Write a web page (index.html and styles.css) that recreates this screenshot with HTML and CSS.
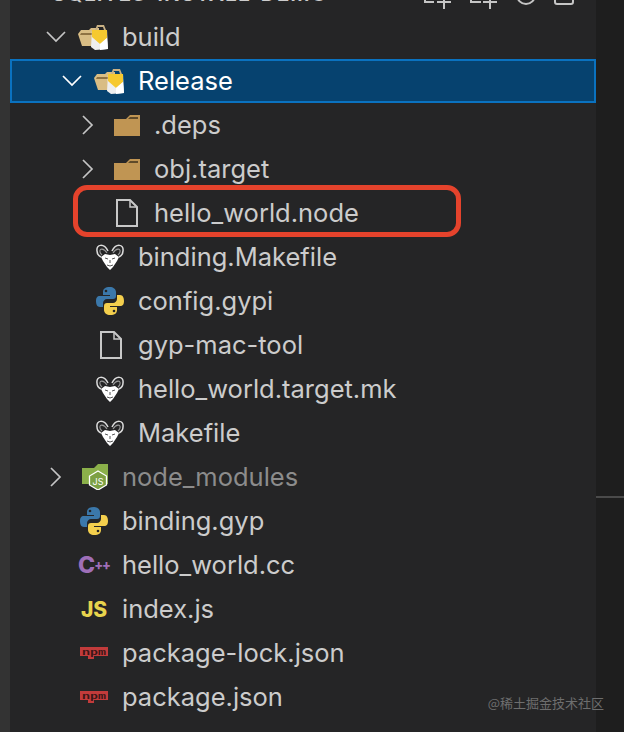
FILE: index.html
```html
<!DOCTYPE html>
<html lang="en">

<head>
    <meta charset="UTF-8">
    <meta name="viewport" content="width=device-width, initial-scale=1.0">
    <title>Explorer</title>
    <link rel="stylesheet" href="styles.css">
</head>

<body>

    <!-- Shared icons -->
    <svg class="defs" width="0" height="0">
        <defs>
            <symbol id="chev-down" viewBox="0 0 20 12">
                <path d="M1 1l9 9 9-9" fill="none" stroke="currentColor" stroke-width="1.7" />
            </symbol>
            <symbol id="chev-right" viewBox="0 0 12 20">
                <path d="M1 1l9 9-9 9" fill="none" stroke="currentColor" stroke-width="1.7" />
            </symbol>
            <symbol id="folder-open" viewBox="0 0 30 26">
                <path d="M0 10l3-4h8l2-2h8v18H4z" fill="#d9bd84" />
                <path d="M3 9h11v2H2z" fill="#8f7343" />
                <path d="M14 6h15l1 19-13 1-4-3z" fill="#eee" />
                <path d="M17 6l2-5h7l2 5h-2l-1-3h-5l-1 3z" fill="#c9b184" />
                <path d="M14 6h15v8l-7 6-8-7z" fill="#f6c92f" />
                <path d="M22 20l7-6 1 11-8 1z" fill="#fff" />
            </symbol>
            <symbol id="folder" viewBox="0 0 26 21">
                <path d="M0 4h12l4-4h10v21H0z" fill="#c09553" />
                <path d="M14 4l2-2h8v2z" fill="#5f4a29" />
            </symbol>
            <symbol id="file" viewBox="0 0 22 28">
                <path d="M1 1h13l7 7v19H1z" fill="none" stroke="#c8c8c8" stroke-width="2" />
                <path d="M14 1v7h7" fill="none" stroke="#c8c8c8" stroke-width="1.5" />
            </symbol>
            <symbol id="gnu" viewBox="0 0 28 28">
                <path d="M12 8C8 0 0 1 1 8c0 3 2 5 4 6" fill="none" stroke="#ddd" stroke-width="1.500" />
                <path d="M16 8c4-8 12-7 11 0 0 3-2 5-4 6" fill="none" stroke="#ddd" stroke-width="1.500" />
                <path d="M11 10C8 5 3 5 4 9c0 1 1 2 2 3M17 10c3-5 8-5 7-1 0 1-1 2-2 3" fill="none" stroke="#999" stroke-width="1.100" />
                <path d="M5 14l4-3 5 1 5-1 4 3-2 4-4 6-3 3-3-3-4-6z" fill="#fff" />
                <path d="M9 15l3 1M16 16l3-1M14 17v3M11 22l3 1 3-1" fill="none" stroke="#555" stroke-width="1" />
            </symbol>
            <symbol id="python" viewBox="0 0 28 28">
                <path d="M14 0c-5 0-7 2-7 5v3h7v1H4c-3 0-4 2-4 5s1 6 4 6h3v-4c0-2 2-4 4-4h6c2 0 3-1 3-3V5c0-3-3-5-6-5z" fill="#3b78aa" />
                <path d="M14 28c5 0 7-2 7-5v-3h-7v-1h10c3 0 4-2 4-5s-1-6-4-6h-3v4c0 2-2 4-4 4h-6c-2 0-3 1-3 3v4c0 3 3 5 6 5z" fill="#f4cf4d" />
                <circle cx="10" cy="4" r="1.3" fill="#252526" />
                <circle cx="18" cy="24" r="1.3" fill="#252526" />
            </symbol>
            <symbol id="npm" viewBox="0 0 28 12">
                <path d="M0 0h28v9H14v3H8V9H0z" fill="#c23b3b" />
                <text x="14" y="7.5" textLength="24" lengthAdjust="spacingAndGlyphs" class="npm-text">npm</text>
            </symbol>
        </defs>
    </svg>

    <div class="activity"></div>

    <main class="sidebar">
        <!-- Header, cut off by the top of the window -->
        <div class="head">
            <div class="head-inner">
                <span class="head-title">SQLITE3-INSTALL-DEMO</span>
                <div class="head-actions">
                    <svg class="act" viewBox="0 0 28 26"><path d="M1 1v16h9M20 10v14M13 17h14" fill="none" stroke="#c5c5c5" stroke-width="2" /></svg>
                    <svg class="act" viewBox="0 0 28 26"><path d="M1 4v13h10M20 10v14M13 17h14" fill="none" stroke="#c5c5c5" stroke-width="2" /></svg>
                    <svg class="act act-round" viewBox="0 0 20 20"><circle cx="10" cy="10" r="9" fill="none" stroke="#c5c5c5" stroke-width="2" /></svg>
                    <svg class="act act-round" viewBox="0 0 20 20"><rect x="1" y="1" width="18" height="18" rx="2" fill="none" stroke="#c5c5c5" stroke-width="2" /></svg>
                </div>
            </div>
        </div>

        <ul class="tree">
            <li class="row d0">
                <svg class="chev-d"><use href="#chev-down" /></svg>
                <span class="icon"><svg class="ic-open"><use href="#folder-open" /></svg></span>
                <span class="name">build</span>
            </li>
            <li class="row d1 selected">
                <svg class="chev-d"><use href="#chev-down" /></svg>
                <span class="icon"><svg class="ic-open"><use href="#folder-open" /></svg></span>
                <span class="name">Release</span>
            </li>
            <li class="row d2">
                <svg class="chev-r"><use href="#chev-right" /></svg>
                <span class="icon"><svg class="ic-folder"><use href="#folder" /></svg></span>
                <span class="name">.deps</span>
            </li>
            <li class="row d2">
                <svg class="chev-r"><use href="#chev-right" /></svg>
                <span class="icon"><svg class="ic-folder"><use href="#folder" /></svg></span>
                <span class="name">obj.target</span>
            </li>
            <li class="row d2 no-chev">
                <span class="icon"><svg class="ic-file"><use href="#file" /></svg></span>
                <span class="name">hello_world.node</span>
                <div class="callout"></div>
            </li>
            <li class="row d1 no-chev">
                <span class="icon"><svg class="ic-28"><use href="#gnu" /></svg></span>
                <span class="name">binding.Makefile</span>
            </li>
            <li class="row d1 no-chev">
                <span class="icon"><svg class="ic-28"><use href="#python" /></svg></span>
                <span class="name">config.gypi</span>
            </li>
            <li class="row d1 no-chev">
                <span class="icon"><svg class="ic-file"><use href="#file" /></svg></span>
                <span class="name">gyp-mac-tool</span>
            </li>
            <li class="row d1 no-chev">
                <span class="icon"><svg class="ic-28"><use href="#gnu" /></svg></span>
                <span class="name">hello_world.target.mk</span>
            </li>
            <li class="row d1 no-chev">
                <span class="icon"><svg class="ic-28"><use href="#gnu" /></svg></span>
                <span class="name">Makefile</span>
            </li>
            <li class="row d0 ignored">
                <svg class="chev-r"><use href="#chev-right" /></svg>
                <span class="icon">
                    <svg class="ic-node" viewBox="0 0 26 26">
                        <path d="M0 4h12l4-4h10v20H0z" fill="#8bb04a" />
                        <path d="M16 7l8.500 5v9l-8.500 5-8.500-5v-9z" fill="#7da043" stroke="#fff" stroke-width="1.300" />
                        <text x="16" y="20.500" class="node-text">JS</text>
                    </svg>
                </span>
                <span class="name">node_modules</span>
            </li>
            <li class="row d0 no-chev">
                <span class="icon"><svg class="ic-28"><use href="#python" /></svg></span>
                <span class="name">binding.gyp</span>
            </li>
            <li class="row d0 no-chev">
                <span class="icon"><span class="cpp">C<small>++</small></span></span>
                <span class="name">hello_world.cc</span>
            </li>
            <li class="row d0 no-chev">
                <span class="icon"><span class="js">JS</span></span>
                <span class="name">index.js</span>
            </li>
            <li class="row d0 no-chev">
                <span class="icon"><svg class="ic-npm"><use href="#npm" /></svg></span>
                <span class="name">package-lock.json</span>
            </li>
            <li class="row d0 no-chev">
                <span class="icon"><svg class="ic-npm"><use href="#npm" /></svg></span>
                <span class="name">package.json</span>
            </li>
        </ul>
    </main>

    <div class="editor">
        <div class="editor-line"></div>
    </div>

    <div class="watermark">@稀土掘金技术社区</div>

</body>

</html>
```

FILE: styles.css
```css
html,
body {
    height: 100%;
}

body {
    margin: 0;
    display: flex;
    overflow: hidden;
    background: #252526;
    color: #cccccc;
    font-family: Inter, 'Noto Sans', sans-serif;
    font-size: 25.5px;
}

.defs {
    position: absolute;
}

.activity {
    width: 10px;
    background: #333333;
}

.sidebar {
    width: 586px;
}

.editor {
    flex: 1;
    padding-top: 496px;
    background: #1e1e1e;
}

.editor-line {
    height: 2px;
    background: #4a4a4a;
}

/* Header */
.head {
    height: 15px;
    overflow: hidden;
}

.head-inner {
    display: flex;
    justify-content: space-between;
    margin-top: -19px;
    padding: 0 22px 0 42px;
}

.head-title {
    font-size: 21px;
    font-weight: 600;
    letter-spacing: 1px;
    line-height: 26px;
    white-space: nowrap;
}

.head-actions {
    display: flex;
    gap: 18px;
    align-items: flex-start;
    margin-top: 4px;
}

.act {
    width: 28px;
    height: 26px;
}

.act-round {
    width: 20px;
    height: 20px;
}

/* Tree */
.tree {
    list-style: none;
    margin: 0;
    padding: 0;
}

.row {
    position: relative;
    display: flex;
    align-items: center;
    height: 44px;
    box-sizing: border-box;
    white-space: nowrap;
}

.name {
    margin-bottom: 2px;
}

.d0 {
    padding-left: 36px;
}

.d1 {
    padding-left: 52px;
}

.d2 {
    padding-left: 68px;
}

.no-chev {
    padding-left: calc(var(--x, 0px));
}

.d0.no-chev {
    --x: 68px;
}

.d1.no-chev {
    --x: 84px;
}

.d2.no-chev {
    --x: 100px;
}

.selected {
    background: #06426f;
    border: 2px solid #0a72c0;
    padding-left: 50px;
    color: #ffffff;
}

.ignored {
    color: #8c8c8c;
}

.chev-d {
    width: 20px;
    height: 12px;
    margin-right: 12px;
    color: #c5c5c5;
}

.selected .chev-d {
    color: #ffffff;
}

.chev-r {
    width: 12px;
    height: 20px;
    margin: 0 16px 0 4px;
    color: #c5c5c5;
}

.icon {
    display: flex;
    align-items: center;
    justify-content: center;
    width: 30px;
    margin-right: 14px;
}

.ic-open {
    width: 30px;
    height: 26px;
}

.ic-folder {
    width: 26px;
    height: 21px;
    margin-left: 4px;
}

.ic-file {
    width: 22px;
    height: 28px;
    margin-left: 4px;
}

.ic-28 {
    width: 28px;
    height: 28px;
    margin-left: 2px;
}

.ic-node {
    width: 26px;
    height: 26px;
    margin-left: 4px;
}

.ic-npm {
    width: 28px;
    height: 12px;
    margin-left: 2px;
}

.npm-text {
    font-family: 'Liberation Mono', monospace;
    font-size: 9.5px;
    font-weight: bold;
    fill: #3a1616;
    text-anchor: middle;
}

.node-text {
    font-family: Inter, sans-serif;
    font-size: 9px;
    fill: #ffffff;
    text-anchor: middle;
}

.cpp {
    font-family: Inter, sans-serif;
    font-size: 23px;
    font-weight: 800;
    color: #9f6fb8;
    letter-spacing: -1px;
    margin-left: 2px;
}

.cpp small {
    font-size: 13px;
    vertical-align: 3px;
}

.js {
    font-family: Inter, sans-serif;
    font-size: 21px;
    font-weight: 800;
    color: #e8d44d;
    margin-left: 2px;
}

/* Red box drawn over the screenshot */
.callout {
    position: absolute;
    left: 63px;
    top: -6px;
    width: 378px;
    height: 42px;
    border: 5px solid #e5432c;
    border-radius: 14px;
}

.watermark {
    position: absolute;
    right: 20px;
    bottom: 20px;
    font-family: 'Noto Sans CJK SC', sans-serif;
    font-size: 13px;
    color: #6e6e6e;
}
```
